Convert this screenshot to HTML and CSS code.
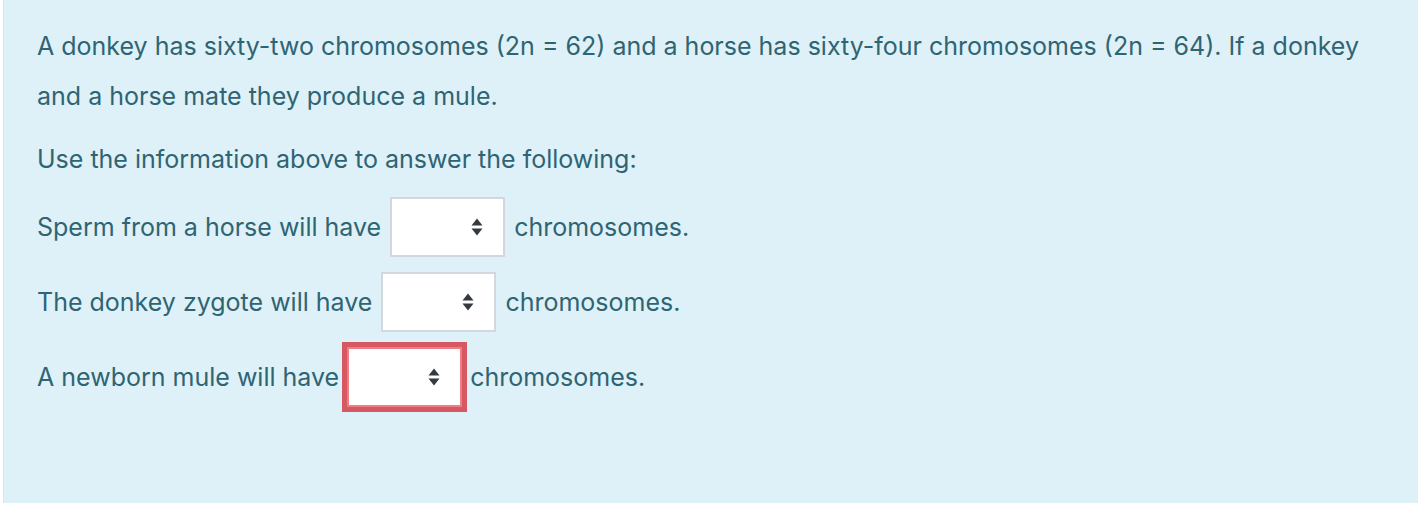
FILE: index.html
```html
<!DOCTYPE html>
<html>
<head>
<meta charset="utf-8">
<title>Question</title>
<link rel="stylesheet" href="styles.css">
</head>
<body>
<div class="formulation">
	<p class="qtext">A donkey has sixty-two chromosomes (2n = 62) and a horse has sixty-four chromosomes (2n = 64). If a donkey and a horse mate they produce a mule.</p>
	<p class="qtext">Use the information above to answer the following:</p>

	<div class="answer-row">
		<span>Sperm from a horse will have</span>
		<span class="select"><svg width="12" height="18" viewBox="0 0 12 18"><path d="M6 0.5L11.5 7.5H0.5Z M0.5 10.5H11.5L6 17.5Z" fill="#343a40"/></svg></span>
		<span>chromosomes.</span>
	</div>
	<div class="answer-row">
		<span>The donkey zygote will have</span>
		<span class="select"><svg width="12" height="18" viewBox="0 0 12 18"><path d="M6 0.5L11.5 7.5H0.5Z M0.5 10.5H11.5L6 17.5Z" fill="#343a40"/></svg></span>
		<span>chromosomes.</span>
	</div>
	<div class="answer-row">
		<span>A newborn mule will have</span>
		<span class="select incorrect"><svg width="12" height="18" viewBox="0 0 12 18"><path d="M6 0.5L11.5 7.5H0.5Z M0.5 10.5H11.5L6 17.5Z" fill="#343a40"/></svg></span>
		<span>chromosomes.</span>
	</div>
</div>
</body>
</html>
```
FILE: styles.css
```css
body{
margin:0;
background:#fff;
font-family: Inter, "Liberation Sans", sans-serif;
font-size: 25px;
color: #2f6473;
}
.formulation{
margin-left:3px;
height:503px;
box-sizing:border-box;
padding:21px 40px 0 33px;
background:#def1f8;
border-left:1px solid #d3e9f1;
}
.qtext{
margin:0 0 13px 0;
line-height:50px;
}
.answer-row{
display:flex;
align-items:center;
gap:9px;
height:60px;
margin-bottom:15px;
}
.select{
display:flex;
align-items:center;
justify-content:flex-end;
box-sizing:border-box;
width:115px;
height:60px;
padding-right:20px;
background:#fff;
border:2px solid #d3d8de;
}
.select.incorrect{
border-color:#f07c84;
box-shadow:0 0 0 5px #d65862;
margin:0 -1px;
}
```
